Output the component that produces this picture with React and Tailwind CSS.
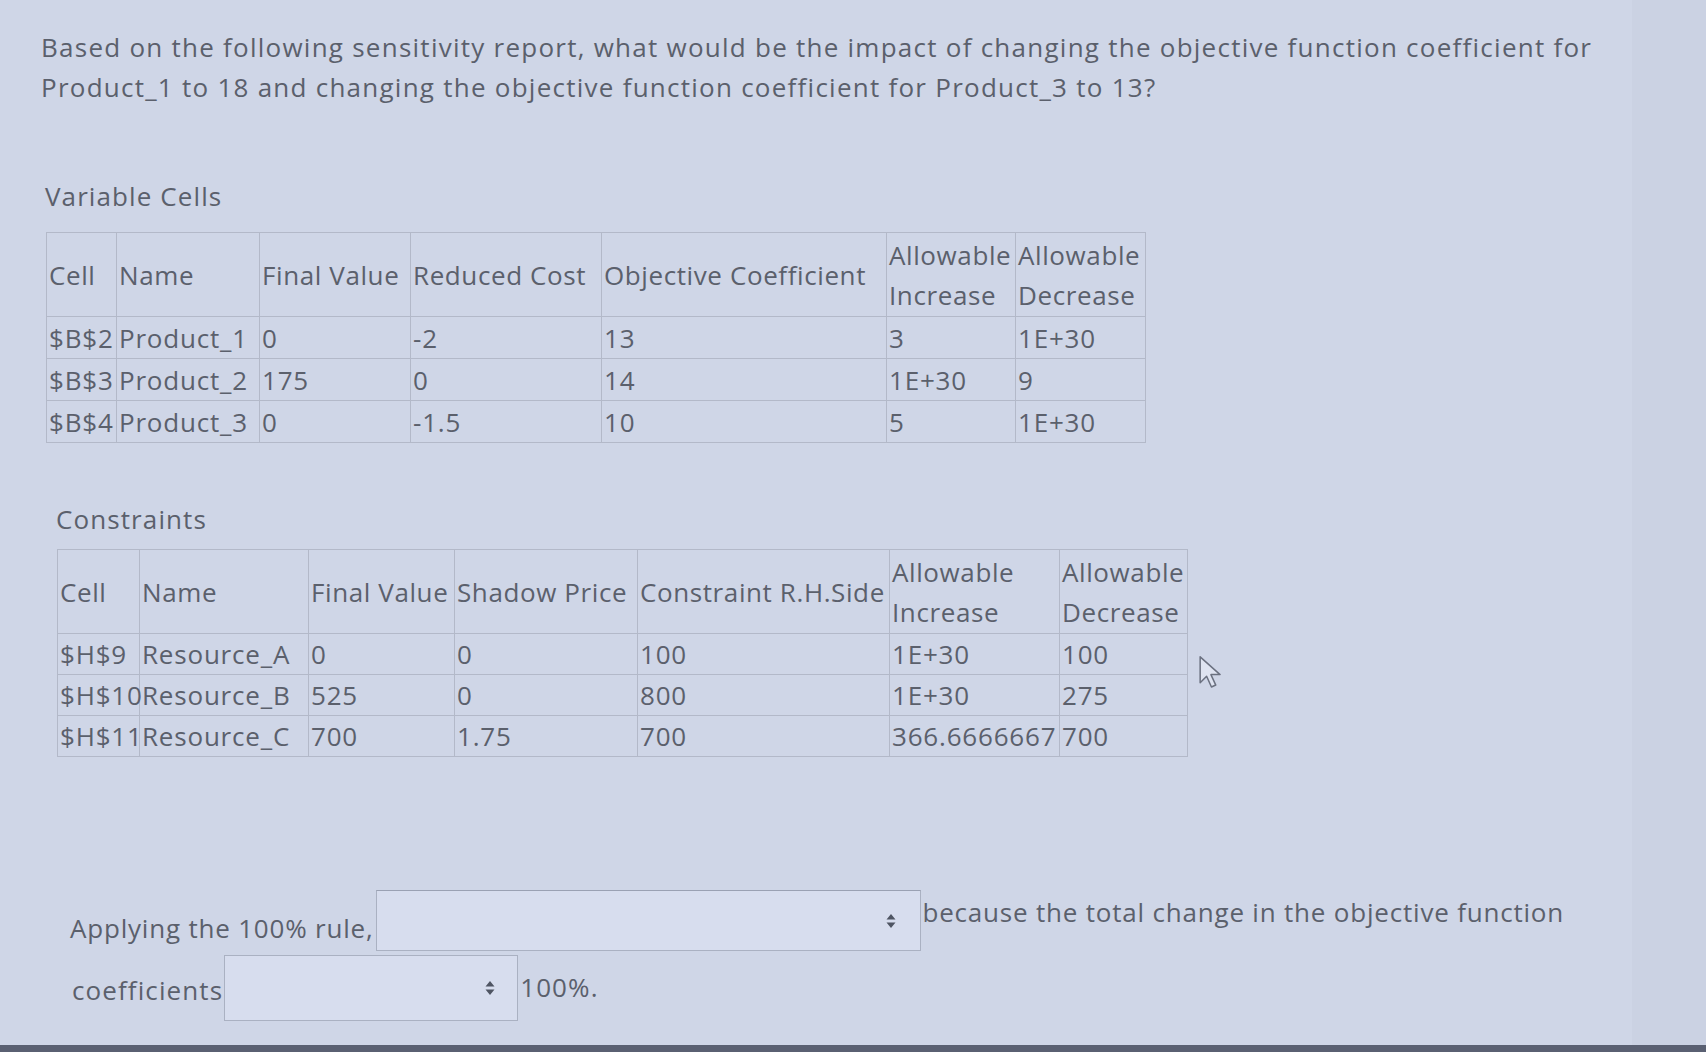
import React from "react";

const font = { fontFamily: '"Open Sans", "Noto Sans", sans-serif' };

const varHead = [
    { label: "Cell", w: "w-[70px]" },
    { label: "Name", w: "w-[143px]" },
    { label: "Final Value", w: "w-[151px]" },
    { label: "Reduced Cost", w: "w-[191px]" },
    { label: "Objective Coefficient", w: "w-[285px]" },
    { label: ["Allowable", "Increase"], w: "w-[129px]" },
    { label: ["Allowable", "Decrease"], w: "w-[130px]" },
];

const varRows = [
    ["$B$2", "Product_1", "0", "-2", "13", "3", "1E+30"],
    ["$B$3", "Product_2", "175", "0", "14", "1E+30", "9"],
    ["$B$4", "Product_3", "0", "-1.5", "10", "5", "1E+30"],
];

const conHead = [
    { label: "Cell", w: "w-[82px]" },
    { label: "Name", w: "w-[169px]" },
    { label: "Final Value", w: "w-[146px]" },
    { label: "Shadow Price", w: "w-[183px]" },
    { label: "Constraint R.H.Side", w: "w-[252px]" },
    { label: ["Allowable", "Increase"], w: "w-[170px]" },
    { label: ["Allowable", "Decrease"], w: "w-[128px]" },
];

const conRows = [
    ["$H$9", "Resource_A", "0", "0", "100", "1E+30", "100"],
    ["$H$10", "Resource_B", "525", "0", "800", "1E+30", "275"],
    ["$H$11", "Resource_C", "700", "1.75", "700", "366.6666667", "700"],
];

const Report = ({ head, rows, rowH, width }) => (
    <table
        className={`${width} table-fixed border-collapse border border-[#a9b0c1] text-[26px] leading-[40px] tracking-[0.8px] text-[#5b606c]`}
    >
        <thead>
            <tr className="h-[84px]">
                {head.map((h, i) => (
                    <th
                        key={i}
                        className={`${h.w} border border-[#b3b9c9] px-[2px] text-left align-middle font-normal whitespace-nowrap tracking-[0.6px]`}
                    >
                        {Array.isArray(h.label) ? (
                            <>
                                <div>{h.label[0]}</div>
                                <div>{h.label[1]}</div>
                            </>
                        ) : (
                            h.label
                        )}
                    </th>
                ))}
            </tr>
        </thead>
        <tbody>
            {rows.map((r) => (
                <tr key={r[0]} className={rowH}>
                    {r.map((c, i) => (
                        <td
                            key={i}
                            className="border border-[#b3b9c9] px-[2px] align-middle whitespace-nowrap"
                        >
                            {c}
                        </td>
                    ))}
                </tr>
            ))}
        </tbody>
    </table>
);

const Arrows = () => (
    <svg width="10" height="14" viewBox="0 0 10 14">
        <path d="M5 0 L9.5 5.5 L0.5 5.5 Z M5 14 L9.5 8.5 L0.5 8.5 Z" fill="#4f5563" />
    </svg>
);

const Cursor = () => (
    <svg width="28" height="40" viewBox="0 0 26 34">
        <path
            d="M2 2 L2 26 L8 20 L12.5 30 L16.5 28.2 L12 18.5 L20.5 18.5 Z"
            fill="#dfe4f1"
            stroke="#6b7180"
            strokeWidth="1.4"
            strokeLinejoin="round"
        />
    </svg>
);

export default function App() {
    return (
        <div
            style={font}
            className="relative h-[1052px] w-[1706px] overflow-hidden bg-[#cfd6e7] text-[#5b606c]"
        >
            <div className="absolute inset-y-0 right-0 w-[74px] bg-[#cbd2e3]" />
            <div className="absolute inset-x-0 bottom-0 h-[7px] bg-[#5a6072]" />

            <div className="relative pl-[41px] pt-[27px]">
                <p className="text-[26px] leading-[40px] tracking-[1.25px]">
                    Based on the following sensitivity report, what would be the impact of changing the objective function coefficient for
                    <br />
                    Product_1 to 18 and changing the objective function coefficient for Product_3 to 13?
                </p>

                <p className="mt-[69px] pl-[4px] text-[26px] leading-[40px] tracking-[1.1px]">Variable Cells</p>
                <div className="mt-[16px] pl-[5px]">
                    <Report head={varHead} rows={varRows} rowH="h-[42px]" width="w-[1099px]" />
                </div>

                <p className="mt-[56px] pl-[15px] text-[26px] leading-[40px] tracking-[1.1px]">Constraints</p>
                <div className="relative mt-[10px] w-fit pl-[16px]">
                    <Report head={conHead} rows={conRows} rowH="h-[41px]" width="w-[1130px]" />
                    <div className="absolute right-[-38px] top-[104px]">
                        <Cursor />
                    </div>
                </div>

                <div className="mt-[133px] flex items-start pl-[29px] text-[26px] leading-[40px] tracking-[0.8px]">
                    <span className="mt-[18px]">Applying the 100% rule,</span>
                    <div className="ml-[2px] flex h-[61px] w-[545px] items-center justify-end border border-[#aab1c2] border-t-[#9aa1b3] bg-[#d7ddee] pr-[24px]">
                        <Arrows />
                    </div>
                    <span className="ml-[2px] mt-[2px]">because the total change in the objective function</span>
                </div>

                <div className="mt-[4px] flex items-start pl-[31px] text-[26px] leading-[40px] tracking-[1.1px]">
                    <span className="mt-[15px]">coefficients</span>
                    <div className="ml-[1px] flex h-[66px] w-[294px] items-center justify-end border border-[#aab1c2] bg-[#d7ddee] pr-[22px]">
                        <Arrows />
                    </div>
                    <span className="ml-[2px] mt-[12px]">100%.</span>
                </div>
            </div>
        </div>
    );
}
